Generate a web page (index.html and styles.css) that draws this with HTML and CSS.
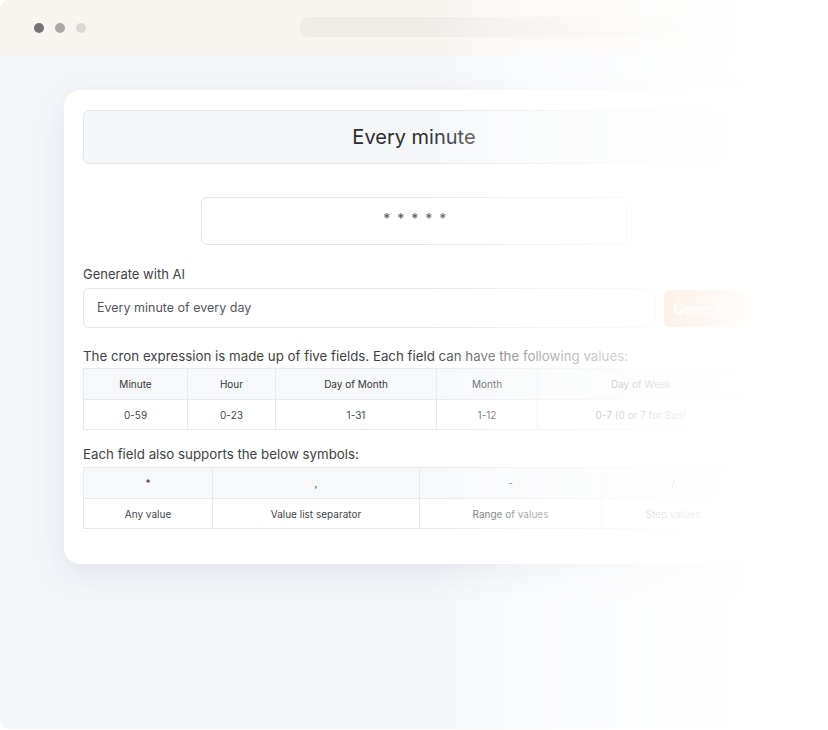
FILE: index.html
```html
<!DOCTYPE html>
<html lang="en">
<head>
<meta charset="utf-8">
<title>Cron expression</title>
<link rel="stylesheet" href="styles.css">
</head>
<body>
<div class="window">
  <div class="titlebar">
    <div class="dots">
      <span class="dot dot-1"></span>
      <span class="dot dot-2"></span>
      <span class="dot dot-3"></span>
    </div>
    <div class="urlbar"></div>
  </div>
  <div class="content">
    <div class="card">
      <div class="headline">Every minute</div>
      <div class="cron">* * * * *</div>
      <div class="ai">
        <div class="label">Generate with AI</div>
        <div class="ai-row">
          <div class="ai-input">Every minute of every day</div>
          <button class="generate">Generate</button>
        </div>
      </div>
      <p class="text text-first">The cron expression is made up of five fields. Each field can have the following values:</p>
      <table class="grid fields">
        <tr><th>Minute</th><th>Hour</th><th>Day of Month</th><th>Month</th><th>Day of Week</th></tr>
        <tr><td>0-59</td><td>0-23</td><td>1-31</td><td>1-12</td><td>0-7 (0 or 7 for Sun)</td></tr>
      </table>
      <p class="text text-second">Each field also supports the below symbols:</p>
      <table class="grid symbols">
        <tr><th>*</th><th>,</th><th>-</th><th>/</th></tr>
        <tr><td>Any value</td><td>Value list separator</td><td>Range of values</td><td>Step values</td></tr>
      </table>
    </div>
  </div>
  <div class="fade"></div>
</div>
</body>
</html>
```

FILE: styles.css
```css
* { box-sizing: border-box; }
html, body {
  margin: 0;
  padding: 0;
  background: #ffffff;
}
body {
  font-family: Inter, "Noto Sans", sans-serif;
  width: 828px;
  height: 730px;
  overflow: hidden;
}
.window {
  position: relative;
  width: 828px;
  height: 729px;
  background: #f4f6fa;
  border-radius: 10px 0 0 10px;
  overflow: hidden;
}
.titlebar {
  height: 55px;
  background: #f8f4f0;
  display: flex;
  align-items: center;
  padding-left: 34px;
}
.dots {
  display: flex;
  gap: 11px;
}
.dot {
  width: 10px;
  height: 10px;
  border-radius: 50%;
}
.dot-1 { background: #737373; }
.dot-2 { background: #a9a9a9; }
.dot-3 { background: #d9d9d9; }
.urlbar {
  margin-left: 214px;
  margin-top: -1px;
  width: 420px;
  height: 20px;
  border-radius: 8px;
  background: #efebe7;
}
.content {
  padding: 35px 0 0 64px;
}
.card {
  width: 700px;
  background: #ffffff;
  border-radius: 16px;
  padding: 20px 19px 35px;
  box-shadow: 0 10px 32px rgba(30, 40, 70, 0.09);
}
.headline {
  height: 54px;
  border: 1px solid #e4e6ea;
  border-radius: 6px;
  background: #f6f7f9;
  display: flex;
  align-items: center;
  justify-content: center;
  font-size: 20px;
  color: #2b2d31;
}
.cron {
  width: 426px;
  height: 48px;
  margin: 33px auto 0;
  border: 1px solid #e4e6ea;
  border-radius: 6px;
  display: flex;
  align-items: center;
  justify-content: center;
  font-size: 14px;
  letter-spacing: 1.5px;
  color: #50545b;
  padding: 0 0 6px 3px;
}
.ai { margin-top: 18px; }
.label {
  font-size: 13px;
  line-height: 20px;
  color: #3f4146;
  padding-top: 1px;
}
.ai-row {
  display: flex;
  gap: 8px;
  margin-top: 4px;
  align-items: center;
}
.ai-input {
  flex: 1;
  height: 40px;
  border: 1px solid #e3e5e8;
  border-radius: 6px;
  padding: 0 0 1px 13px;
  display: flex;
  align-items: center;
  font-size: 12.5px;
  color: #55585e;
}
.generate {
  width: 81px;
  height: 37px;
  border: none;
  border-radius: 6px;
  background: #f59150;
  color: #ffffff;
  font-family: inherit;
  font-size: 14px;
  font-weight: 500;
}
.text {
  margin: 0;
  font-size: 13.3px;
  line-height: 20px;
  color: #3f4146;
}
.text-first { margin-top: 18px; }
.text-second { margin-top: 14px; }
.grid {
  width: 100%;
  border-collapse: collapse;
  table-layout: fixed;
  font-size: 10px;
  text-align: center;
}
.fields { margin-top: 2px; }
.symbols { margin-top: 3px; }
.grid th, .grid td {
  border: 1px solid #e6e8eb;
  padding: 0;
  font-weight: 400;
}
.grid th {
  height: 31px;
  background: #f7f8fa;
  color: #34363a;
}
.grid td {
  height: 30px;
  color: #44474c;
}
.fields th:nth-child(1) { width: 104px; }
.fields th:nth-child(2) { width: 88px; }
.fields th:nth-child(3) { width: 161px; }
.fields th:nth-child(4) { width: 101px; }
.symbols th:nth-child(1) { width: 129px; }
.symbols th:nth-child(2) { width: 207px; }
.symbols th:nth-child(3) { width: 182px; }
.fade {
  position: absolute;
  inset: 0;
  pointer-events: none;
  background: linear-gradient(90deg, rgba(255,255,255,0) 51%, rgba(255,255,255,0.55) 64%, rgba(255,255,255,0.88) 80%, #ffffff 92%);
}
```
